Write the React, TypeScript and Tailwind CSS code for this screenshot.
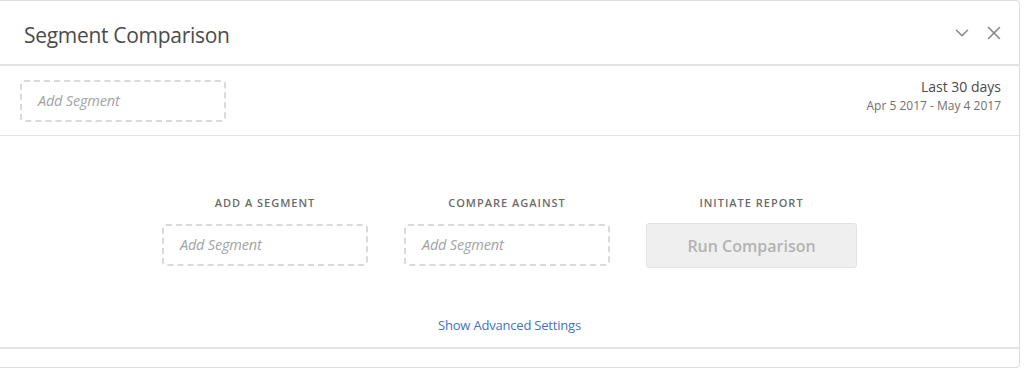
import { ChevronDown, X } from "lucide-react";

const font = { fontFamily: '"Open Sans", "Liberation Sans", sans-serif' };

const DashedBox = ({ className = "" }: { className?: string }) => (
  <div
    className={`h-[42px] w-[206px] rounded-[4px] border-2 border-dashed border-[#dadada] flex items-center px-[16px] ${className}`}
  >
    <span className="text-[14.5px] italic text-[#a3a3a3] tracking-[-0.2px]">
      Add Segment
    </span>
  </div>
);

const Column = ({
  label,
  children,
}: {
  label: string;
  children: React.ReactNode;
}) => (
  <div className="flex flex-col items-center">
    <div className="text-[11px] font-semibold tracking-[1px] text-[#6b6b6b] h-[14px] leading-[14px]">
      {label}
    </div>
    <div className="mt-[14px]">{children}</div>
  </div>
);

export default function App() {
  return (
    <div className="w-[1024px] h-[371px] bg-white" style={font}>
      <div className="w-[1020px] h-[368px] border-t border-r border-b border-[#dcdcdc] rounded-tr-[4px] rounded-br-[4px] flex flex-col">
        {/* header */}
        <div className="h-[65px] flex items-center justify-between pl-[24px] pr-[14px] border-b-2 border-[#e3e3e3]">
          <h1 className="text-[21px] text-[#4b4b4b] tracking-[-0.3px] mt-[6px]">
            Segment Comparison
          </h1>
          <div className="flex items-center gap-[10px] text-[#8a8a8a]">
            <ChevronDown className="h-[22px] w-[22px]" strokeWidth={1.75} />
            <X className="h-[22px] w-[22px]" strokeWidth={1.75} />
          </div>
        </div>

        {/* segment + date row */}
        <div className="h-[70px] flex items-center justify-between pl-[20px] pr-[18px] border-b border-[#e3e3e3]">
          <DashedBox />
          <div className="flex flex-col items-end mt-[-10px]">
            <div className="text-[14px] text-[#4b4b4b] leading-[20px]">
              Last 30 days
            </div>
            <div className="text-[12px] text-[#707070] leading-[18px]">
              Apr 5 2017 - May 4 2017
            </div>
          </div>
        </div>

        {/* body */}
        <div className="flex-1 flex flex-col items-center pt-[60px]">
          <div className="flex items-start gap-[36px]">
            <Column label="ADD A SEGMENT">
              <DashedBox />
            </Column>
            <Column label="COMPARE AGAINST">
              <DashedBox />
            </Column>
            <Column label="INITIATE REPORT">
              <button
                type="button"
                className="h-[45px] w-[211px] mt-[-1px] rounded-[3px] border border-[#e2e2e2] bg-[#efefef] text-[16px] font-semibold text-[#b3b3b3]"
              >
                Run Comparison
              </button>
            </Column>
          </div>
          <a className="mt-[48px] text-[13px] text-[#3f72c9] tracking-[-0.2px] cursor-pointer">
            Show Advanced Settings
          </a>
        </div>

        <div className="h-[20px] border-t-2 border-[#e3e3e3]" />
      </div>
    </div>
  );
}
